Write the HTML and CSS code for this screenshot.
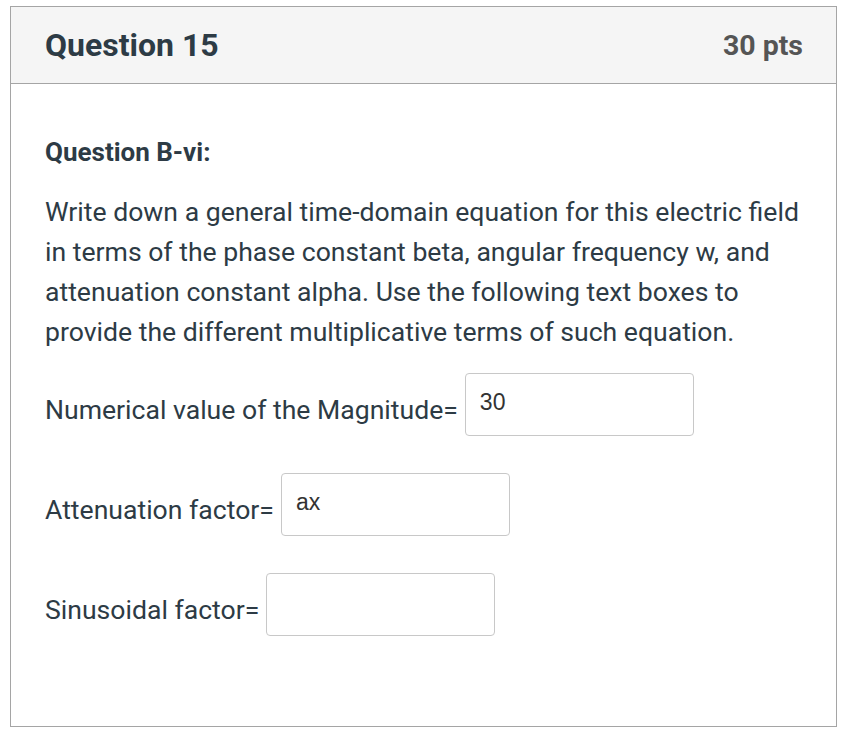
FILE: index.html
```html
<!DOCTYPE html>
<html>
<head>
<meta charset="utf-8">
<link rel="stylesheet" href="styles.css">
</head>
<body>
<div class="card">
  <div class="header">
    <h2 class="title">Question 15</h2>
    <div class="pts">30 pts</div>
  </div>
  <div class="content">
    <p class="subhead">Question B-vi:</p>
    <p class="text">Write down a general time-domain equation for this electric field in terms of the phase constant beta, angular frequency w, and attenuation constant alpha. Use the following text boxes to provide the different multiplicative terms of such equation.</p>
    <div class="row"><span class="label">Numerical value of the Magnitude=</span><span class="box">30</span></div>
    <div class="row"><span class="label">Attenuation factor=</span><span class="box">ax</span></div>
    <div class="row"><span class="label">Sinusoidal factor=</span><span class="box"></span></div>
  </div>
</div>
</body>
</html>
```
FILE: styles.css
```css
html, body { margin: 0; padding: 0; background: #fff; }
body { font-family: Roboto, "Liberation Sans", sans-serif; color: #2d3b45; }
.card {
  margin: 6px 0 0 10px;
  width: 827px;
  height: 721px;
  box-sizing: border-box;
  border: 1px solid #a5a5a5;
}
.header {
  height: 77px;
  box-sizing: border-box;
  background: #f5f5f5;
  border-bottom: 1px solid #a5a5a5;
  display: flex;
  align-items: center;
  justify-content: space-between;
  padding: 0 33px 0 34px;
}
.title { margin: 0; font-size: 32px; font-weight: 700; color: #2d3b45; }
.pts { font-size: 28.5px; font-weight: 700; color: #555; }
.content { padding: 48px 34px 0 34px; }
.subhead { margin: 0 0 20px 0; font-size: 26px; font-weight: 700; line-height: 40px; }
.text { margin: 0; font-size: 26.6px; line-height: 40px; }
.row { display: flex; align-items: center; margin-top: 20px; height: 64px; font-size: 26.6px; }
.row + .row { margin-top: 36px; }
.label { margin-right: 7px; padding-top: 11px; }
.box {
  width: 229px; height: 63px; box-sizing: border-box;
  border: 1px solid #c8c8c8; border-radius: 4px;
  font-family: "Liberation Sans", Arial, sans-serif;
  font-size: 23px; line-height: 26px; color: #333;
  padding: 15px 14px 0 14px;
}
```
